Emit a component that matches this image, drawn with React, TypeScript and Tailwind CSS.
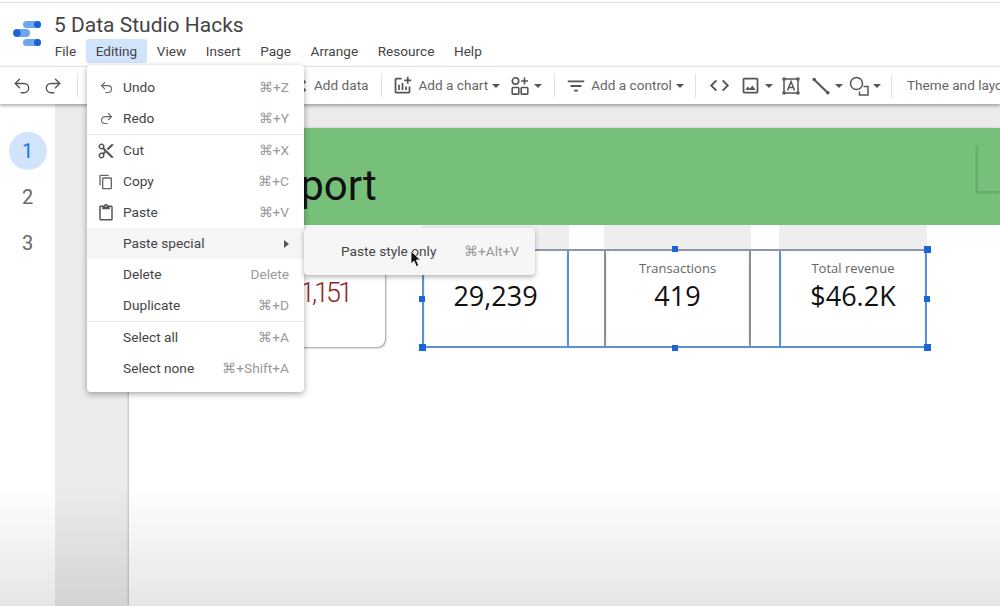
import { MdContentCut, MdOutlineContentCopy, MdOutlineContentPaste, MdOutlineAddchart, MdFilterList, MdCode, MdOutlineImage } from 'react-icons/md'
import { Undo2, Redo2 } from 'lucide-react'

const topMenu = ['File', 'Editing', 'View', 'Insert', 'Page', 'Arrange', 'Resource', 'Help']

function Logo() {
  return (
    <svg width="28" height="26" viewBox="0 0 28 26" className="shrink-0">
      <rect x="10" y="0" width="18" height="7" rx="3.5" fill="#6fa4ef" />
      <circle cx="24.5" cy="3.5" r="3.5" fill="#1a62d6" />
      <rect x="0" y="8" width="17" height="8" rx="4" fill="#6fa4ef" />
      <circle cx="4" cy="12" r="3.7" fill="#1a62d6" />
      <rect x="10" y="18" width="18" height="7" rx="3.5" fill="#6fa4ef" />
      <circle cx="24.5" cy="21.5" r="3.5" fill="#1a62d6" />
    </svg>
  )
}

function Caret() {
  return <span className="ml-[4px] h-0 w-0 shrink-0 border-x-[4px] border-t-[4px] border-x-transparent border-t-[#555]" />
}

function Divider({ className }: { className: string }) {
  return <span className={`h-[24px] w-px shrink-0 bg-[#e2e2e2] ${className}`} />
}

function CommunityIcon() {
  return (
    <svg width="20" height="20" viewBox="0 0 20 20" fill="none" stroke="#555" strokeWidth="1.6" className="shrink-0">
      <circle cx="5.5" cy="5" r="3.2" />
      <path d="M14.5 1.5v7M11 5h7" />
      <rect x="2.2" y="11.5" width="6.6" height="6.6" rx="0.8" />
      <rect x="11.2" y="11.5" width="6.6" height="6.6" rx="0.8" />
    </svg>
  )
}

function TextBoxIcon() {
  return (
    <svg width="20" height="20" viewBox="0 0 20 20" fill="none" stroke="#555" strokeWidth="1.5" className="shrink-0">
      <rect x="3" y="3" width="14" height="14" />
      <rect x="1.5" y="1.5" width="3" height="3" fill="#555" stroke="none" />
      <rect x="15.5" y="1.5" width="3" height="3" fill="#555" stroke="none" />
      <rect x="1.5" y="15.5" width="3" height="3" fill="#555" stroke="none" />
      <rect x="15.5" y="15.5" width="3" height="3" fill="#555" stroke="none" />
      <path d="M6.5 14.5 10 5.5l3.5 9M7.8 11.5h4.4" />
    </svg>
  )
}

function LineIcon() {
  return (
    <svg width="20" height="20" viewBox="0 0 20 20" fill="none" stroke="#555" strokeWidth="2" className="shrink-0">
      <path d="M3 3.5 17 17" />
      <circle cx="3.2" cy="3.5" r="1.8" fill="#555" stroke="none" />
      <circle cx="16.8" cy="16.8" r="1.8" fill="#555" stroke="none" />
    </svg>
  )
}

function ShapeIcon() {
  return (
    <svg width="20" height="20" viewBox="0 0 20 20" fill="none" stroke="#555" strokeWidth="1.5" className="shrink-0">
      <circle cx="7.5" cy="7.5" r="6" />
      <path d="M14.5 10.5h4.5v8.5h-8.5v-3.5" />
    </svg>
  )
}

function AddDataIcon() {
  return (
    <svg width="18" height="18" viewBox="0 0 18 18" fill="none" stroke="#666" strokeWidth="1.6" className="shrink-0">
      <path d="M3 4h8M3 9h8M3 14h8M14 3v4M12 5h4M14 11v4M12 13h4" />
    </svg>
  )
}

function Toolbar() {
  return (
    <div className="relative z-10 flex h-[38px] items-center overflow-hidden whitespace-nowrap border-t border-[#e6e6e6] bg-white pl-[12px] text-[13.6px] text-[#666] shadow-[0_2px_3px_rgba(0,0,0,0.3)]">
      <Undo2 size={20} color="#555" strokeWidth={1.7} className="shrink-0" />
      <Redo2 size={20} color="#555" strokeWidth={1.7} className="ml-[11px] shrink-0" />
      <Divider className="ml-[14px]" />
      <span className="ml-[212px]"><AddDataIcon /></span>
      <span className="ml-[6px]">Add data</span>
      <Divider className="ml-[13px]" />
      <MdOutlineAddchart size={21} color="#555" className="ml-[10px] shrink-0" />
      <span className="ml-[5px]">Add a chart</span>
      <Caret />
      <span className="ml-[10px]"><CommunityIcon /></span>
      <Caret />
      <Divider className="ml-[12px]" />
      <MdFilterList size={22} color="#555" className="ml-[10px] shrink-0" />
      <span className="ml-[4px]">Add a control</span>
      <Caret />
      <Divider className="ml-[11px]" />
      <MdCode size={23} color="#555" className="ml-[12px] shrink-0" />
      <MdOutlineImage size={21} color="#555" className="ml-[9px] shrink-0" />
      <Caret />
      <span className="ml-[8px]"><TextBoxIcon /></span>
      <span className="ml-[10px]"><LineIcon /></span>
      <Caret />
      <span className="ml-[6px]"><ShapeIcon /></span>
      <Caret />
      <Divider className="ml-[10px]" />
      <span className="ml-[15px]">Theme and layout</span>
    </div>
  )
}

function Handle({ className }: { className: string }) {
  return <span className={`absolute bg-[#1b66d4] ${className}`} />
}

function Scorecard({ label, value, border, width }: { label: string; value: string; border: string; width: string }) {
  return (
    <div className={`flex flex-col ${width}`}>
      <div className="h-[24px] bg-[#eeeeee]" />
      <div className={`h-[99px] border-x-2 ${border} font-['Open_Sans',sans-serif]`}>
        <div className="flex h-full flex-col items-center rounded-lg border border-[#eeeeee] bg-white pt-[9px]">
          <span className="text-[13px] leading-[18px] text-[#666]">{label}</span>
          <span className="mt-[1px] text-[27px] leading-[36px] text-[#111]">{value}</span>
        </div>
      </div>
    </div>
  )
}

function Canvas() {
  return (
    <div className="flex-1 bg-white shadow-[-1px_0_2px_rgba(0,0,0,0.2)]">
      <div className="flex h-[97px] items-center justify-between bg-[#77c07a] pl-[123px]">
        <span className="pt-[18px] text-[42px] leading-none text-[#111]">Report</span>
        <div className="mt-[17px] h-[47px] w-[23px] self-start border-b border-l border-[#6aa96d] shadow-[-1px_1px_2px_rgba(0,0,0,0.15)]" />
      </div>
      <div className="flex">
        <div className="ml-[75px] mt-[24px] flex h-[98px] w-[181px] items-center justify-end rounded-lg bg-white pb-[10px] pr-[35px] text-[27px] font-light tracking-[-3px] text-[#8f1f28] shadow-[1px_1px_2px_rgba(0,0,0,0.4)]">
          1,151
        </div>
        <div className="relative ml-[37px] flex h-[123px]">
          <Scorecard label="Sessions" value="29,239" border="border-x-[#5a92d8]" width="w-[147px]" />
          <div className="ml-[35px]">
            <Scorecard label="Transactions" value="419" border="border-x-[#8f8f8f]" width="w-[147px]" />
          </div>
          <div className="ml-[28px]">
            <Scorecard label="Total revenue" value="$46.2K" border="border-x-[#5a92d8]" width="w-[148px]" />
          </div>
          <div className="pointer-events-none absolute inset-x-0 bottom-0 top-[24px] border-y-2 border-b-[#5a92d8] border-t-[#8a99aa]" />
          <Handle className="left-[-3px] top-[21px] h-[7px] w-[7px]" />
          <Handle className="left-[250px] top-[21px] h-[6px] w-[6px]" />
          <Handle className="right-[-4px] top-[21px] h-[7px] w-[7px]" />
          <Handle className="left-[-3px] top-[71px] h-[6px] w-[6px]" />
          <Handle className="right-[-3px] top-[71px] h-[6px] w-[6px]" />
          <Handle className="left-[-3px] bottom-[-3px] h-[7px] w-[7px]" />
          <Handle className="left-[250px] bottom-[-3px] h-[6px] w-[6px]" />
          <Handle className="right-[-4px] bottom-[-3px] h-[7px] w-[7px]" />
        </div>
      </div>
    </div>
  )
}

function MenuRow({ label, shortcut, icon, active, arrow }: { label: string; shortcut?: string; icon?: React.ReactNode; active?: boolean; arrow?: boolean }) {
  return (
    <div className={`flex h-[31px] items-center pr-[15px] ${active ? 'bg-[#f5f5f5]' : ''}`}>
      <span className="flex w-[36px] justify-center pl-[2px]">{icon}</span>
      <span className="text-[13.7px] text-[#444]">{label}</span>
      {shortcut && <span className="ml-auto text-[13.7px] text-[#999]">{shortcut}</span>}
      {arrow && <span className="ml-auto h-0 w-0 border-y-[4.5px] border-l-[5px] border-y-transparent border-l-[#555]" />}
    </div>
  )
}

function EditMenu() {
  return (
    <div className="absolute left-[87px] top-[65px] z-20 w-[217px] rounded-[4px] bg-white pb-[8px] pt-[7px] shadow-[0_2px_6px_rgba(0,0,0,0.35)]">
      <MenuRow label="Undo" shortcut="⌘+Z" icon={<Undo2 size={15} color="#666" strokeWidth={1.7} />} />
      <MenuRow label="Redo" shortcut="⌘+Y" icon={<Redo2 size={15} color="#666" strokeWidth={1.7} />} />
      <div className="h-px bg-[#e8e8e8]" />
      <MenuRow label="Cut" shortcut="⌘+X" icon={<MdContentCut size={18} color="#555" />} />
      <MenuRow label="Copy" shortcut="⌘+C" icon={<MdOutlineContentCopy size={16} color="#666" />} />
      <MenuRow label="Paste" shortcut="⌘+V" icon={<MdOutlineContentPaste size={18} color="#555" />} />
      <MenuRow label="Paste special" active arrow />
      <MenuRow label="Delete" shortcut="Delete" />
      <MenuRow label="Duplicate" shortcut="⌘+D" />
      <div className="h-px bg-[#e8e8e8]" />
      <MenuRow label="Select all" shortcut="⌘+A" />
      <MenuRow label="Select none" shortcut="⌘+Shift+A" />
    </div>
  )
}

function PasteSubmenu() {
  return (
    <div className="absolute left-[304px] top-[228px] z-30 flex h-[47px] w-[231px] items-center rounded-[4px] bg-[#f6f6f6] pl-[37px] pr-[16px] shadow-[0_2px_5px_rgba(0,0,0,0.3)]">
      <span className="text-[13.7px] text-[#444]">Paste style only</span>
      <span className="ml-auto text-[13.7px] text-[#999]">⌘+Alt+V</span>
    </div>
  )
}

function Cursor() {
  return (
    <svg width="12" height="18" viewBox="0 0 12 18" className="absolute left-[410px] top-[250px] z-40">
      <path d="M1 1v13l3-3 2.3 5.5 2.4-1L6.4 10H10.5Z" fill="#111" stroke="#fff" strokeWidth="0.8" />
    </svg>
  )
}

export default function App() {
  return (
    <div className="relative flex h-[606px] w-[1000px] flex-col overflow-hidden bg-white font-[Roboto,sans-serif]">
      <header className="h-[66px] shrink-0 pt-[2px]">
        <div className="h-px bg-[#dcdcdc]" />
        <div className="flex">
          <div className="ml-[13px] mt-[18px]"><Logo /></div>
          <div className="ml-[13px] pt-[8px]">
            <div className="text-[21px] leading-[28px] text-[#444]">5 Data Studio Hacks</div>
            <nav className="-ml-[9px] flex text-[13.6px] text-[#444]">
              {topMenu.map((item) => (
                <span key={item} className={`rounded-[3px] px-[9.8px] py-[3px] leading-[18px] ${item === 'Editing' ? 'bg-[#d2e3fc]' : ''}`}>{item}</span>
              ))}
            </nav>
          </div>
        </div>
      </header>
      <Toolbar />
      <div className="flex flex-1">
        <aside className="flex w-[55px] shrink-0 flex-col items-center gap-[8px] pt-[28px] text-[20px] text-[#666]">
          <span className="flex h-[38px] w-[38px] items-center justify-center rounded-full bg-[#d2e3fc] text-[#1a73e8]">1</span>
          <span className="flex h-[38px] w-[38px] items-center justify-center">2</span>
          <span className="flex h-[38px] w-[38px] items-center justify-center">3</span>
        </aside>
        <div className="flex flex-1 bg-[#ebebeb] pl-[74px] pt-[24px]">
          <Canvas />
        </div>
      </div>
      <EditMenu />
      <PasteSubmenu />
      <Cursor />
      <div className="pointer-events-none absolute inset-x-0 bottom-0 z-50 h-[118px] bg-gradient-to-b from-transparent to-black/10" />
    </div>
  )
}
